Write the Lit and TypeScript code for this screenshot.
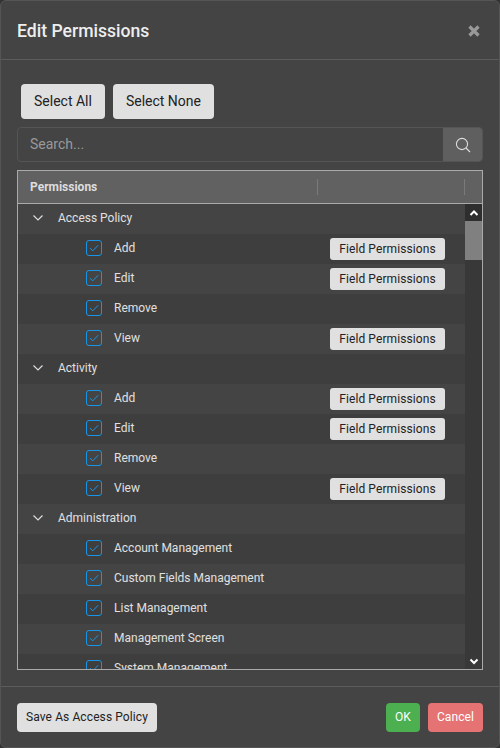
import { LitElement, html, css, svg } from "lit";
import { customElement } from "lit/decorators.js";

type Row = { t: string; group?: boolean; fp?: boolean };
const rows: Row[] = [
  { t: "Access Policy", group: true },
  { t: "Add", fp: true }, { t: "Edit", fp: true }, { t: "Remove" }, { t: "View", fp: true },
  { t: "Activity", group: true },
  { t: "Add", fp: true }, { t: "Edit", fp: true }, { t: "Remove" }, { t: "View", fp: true },
  { t: "Administration", group: true },
  { t: "Account Management" }, { t: "Custom Fields Management" }, { t: "List Management" },
  { t: "Management Screen" }, { t: "System Management" },
];

@customElement("app-root")
export class AppRoot extends LitElement {
  static styles = css`
    :host { display: block; width: 500px; height: 748px; background: #333; font-family: Roboto, "Liberation Sans", sans-serif; }
    * { box-sizing: border-box; }
    .modal { width: 500px; height: 748px; background: #444; border: 1px solid #555; border-radius: 6px; display: flex; flex-direction: column; overflow: hidden; }
    .head { flex: none; border-bottom: 1px solid #5c5c5c; display: flex; align-items: center; justify-content: space-between; padding: 1px 19px 0 16px; box-sizing: content-box; height: 57px; }
    .title { font-size: 17.6px; font-weight: 500; color: #eee; }
    .x { display: flex; }
    .body { flex: 1; min-height: 0; padding: 24px 16px 0; display: flex; flex-direction: column; }
    .tools { display: flex; gap: 8px; padding: 0 4px; }
    .btn { border: 0; border-radius: 4px; background: #e0e0e0; color: #222; font: 400 14px Roboto, sans-serif; height: 35px; padding: 0 13px 2px; }
    .search { margin-top: 8px; height: 35px; border: 1px solid #555; border-radius: 4px; display: flex; overflow: hidden; }
    .search .ph { flex: 1; padding-left: 12px; color: #999; font-size: 14px; line-height: 33px; }
    .search .go { width: 39px; background: #5f5f5f; display: flex; align-items: center; justify-content: center; }
    .grid { margin-top: 8px; height: 500px; border: 1px solid #aaa; display: flex; flex-direction: column; overflow: hidden; }
    .ghead { flex: none; height: 33px; background: #616161; border-bottom: 1px solid #aaa; display: flex; align-items: center; padding-left: 12px; position: relative; }
    .ghead b { font-size: 12px; font-weight: 700; color: #ddd; }
    .sep { width: 1px; height: 16px; background: #7a7a7a; position: absolute; top: 8px; }
    .scrollwrap { flex: 1; min-height: 0; display: flex; }
    .rows { flex: 1; min-width: 0; overflow: hidden; }
    .row { height: 30px; display: flex; align-items: center; font-size: 12px; color: #e0e0e0; }
    .row:nth-child(even) { background: #3e3e3e; }
    .row .chev { width: 40px; display: flex; justify-content: center; flex: none; }
    .group { padding-bottom: 2px; }
    .item { padding-left: 68px; }
    .cb { width: 16px; height: 16px; border: 1.5px solid #1796e8; border-radius: 3px; display: flex; flex: none; align-items: center; justify-content: center; margin: -2px 12px 0 0; }
    .lbl { flex: 1; margin-top: -2px; }
    .fp { background: #e0e0e0; color: #222; border: 0; border-radius: 3px; height: 22px; width: 115px; font: 400 12px Roboto, sans-serif; letter-spacing: 0.1px; margin-right: 20px; padding: 0; }
    .bar { width: 17px; flex: none; background: #383838; display: flex; flex-direction: column; }
    .arrow { height: 17px; display: flex; align-items: center; justify-content: center; flex: none; }
    .arrow.top { background: #2e2e2e; }
    .thumb { height: 39px; background: #808080; flex: none; }
    .track { flex: 1; }
    .foot { flex: none; height: 61px; border-top: 1px solid #5c5c5c; margin-top: 16px; display: flex; align-items: center; padding: 0 16px; gap: 8px; }
    .foot .btn { height: 29px; padding: 0 9px 1px; font-size: 12px; letter-spacing: 0.1px; }
    .spacer { flex: 1; }
    .foot .ok { background: #4caf50; color: #fff; width: 34px; padding: 0 0 1px; }
    .foot .cancel { background: #e57373; color: #fff; width: 55px; padding: 0 0 1px; }
  `;

  private check() {
    return html`<svg width="12" height="12" viewBox="0 0 12 12" fill="none" stroke="#1796e8" stroke-width="1"><path d="M2 6.2 L4.8 8.8 L10.2 3.2"/></svg>`;
  }
  private arrow(up: boolean) {
    const d = up ? "M1.5 6 L5 2.5 L8.5 6" : "M1.5 2.5 L5 6 L8.5 2.5";
    return html`<svg width="10" height="8" viewBox="0 0 10 8" fill="none" stroke="#fff" stroke-width="2">${svg`<path d=${d}/>`}</svg>`;
  }

  render() {
    return html`<div class="modal">
      <div class="head">
        <div class="title">Edit Permissions</div>
        <div class="x"><svg width="12" height="12" viewBox="0 0 12 12" stroke="#999" stroke-width="3.2" fill="none"><path d="M1.5 1.5 L10.5 10.5 M10.5 1.5 L1.5 10.5"/></svg></div>
      </div>
      <div class="body">
        <div class="tools"><button class="btn">Select All</button><button class="btn">Select None</button></div>
        <div class="search">
          <div class="ph">Search...</div>
          <div class="go"><svg width="16" height="16" viewBox="0 0 16 16" fill="none" stroke="#ddd" stroke-width="1.1"><circle cx="7" cy="7" r="5.6"/><path d="M11 11 L15 15"/></svg></div>
        </div>
        <div class="grid">
          <div class="ghead"><b>Permissions</b><span class="sep" style="left:299px"></span><span class="sep" style="left:446px"></span></div>
          <div class="scrollwrap">
            <div class="rows">
              ${rows.map((r) => r.group
                ? html`<div class="row group"><div class="chev"><svg width="10" height="6" viewBox="0 0 10 6" fill="none" stroke="#ddd" stroke-width="1.2"><path d="M.5 .5 L5 5 L9.5 .5"/></svg></div><span>${r.t}</span></div>`
                : html`<div class="row item"><div class="cb">${this.check()}</div><span class="lbl">${r.t}</span>${r.fp ? html`<button class="fp">Field Permissions</button>` : ""}</div>`)}
            </div>
            <div class="bar">
              <div class="arrow top">${this.arrow(true)}</div>
              <div class="thumb"></div>
              <div class="track"></div>
              <div class="arrow">${this.arrow(false)}</div>
            </div>
          </div>
        </div>
      </div>
      <div class="foot">
        <button class="btn">Save As Access Policy</button>
        <div class="spacer"></div>
        <button class="btn ok">OK</button>
        <button class="btn cancel">Cancel</button>
      </div>
    </div>`;
  }
}
